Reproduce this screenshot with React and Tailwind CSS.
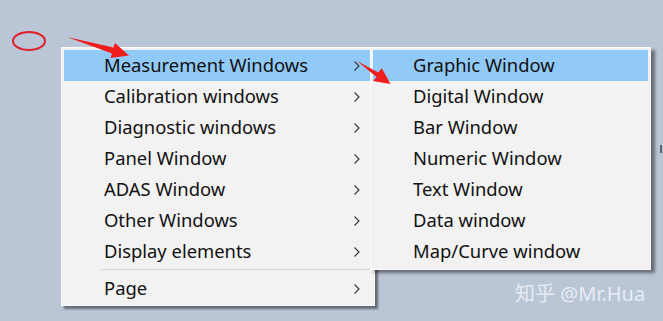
import React from "react";

const mainItems = [
  "Measurement Windows",
  "Calibration windows",
  "Diagnostic windows",
  "Panel Window",
  "ADAS Window",
  "Other Windows",
  "Display elements",
];
const subItems = [
  "Graphic Window",
  "Digital Window",
  "Bar Window",
  "Numeric Window",
  "Text Window",
  "Data window",
  "Map/Curve window",
];

function Chevron() {
  return (
    <svg width="8" height="12" viewBox="0 0 8 12" className="shrink-0">
      <polyline points="1.5,1.5 6,6 1.5,10.5" fill="none" stroke="#333" strokeWidth="1.1" />
    </svg>
  );
}

function Row({ label, active, sub }) {
  return (
    <div
      className={`flex h-[31px] items-center ${active ? "bg-[#91c9f7]" : ""} ${sub ? "pl-[40px]" : "pl-[40px] pr-[11px]"}`}
    >
      <span className="flex-1 text-[18.4px] leading-none text-[#111] whitespace-nowrap">{label}</span>
      {!sub && <Chevron />}
    </div>
  );
}

export default function App() {
  return (
    <div
      className="relative h-[321px] w-[663px] overflow-hidden bg-[#bac5d5]"
      style={{ fontFamily: '"Noto Sans", "Noto Sans CJK SC", sans-serif' }}
    >
      {/* red ellipse */}
      <svg className="absolute left-0 top-0" width="663" height="321">
        <ellipse cx="29" cy="41" rx="16" ry="9" fill="none" stroke="#e0202a" strokeWidth="2" />
      </svg>

      {/* main menu */}
      <div className="absolute left-[61px] top-[47px] w-[314px] border border-[#fbfbfb] bg-[#f2f2f2] p-[2px] pb-[1px] shadow-[3px_3px_2px_rgba(0,0,0,0.45)]">
        <div className="flex flex-col">
          {mainItems.map((t, i) => (
            <Row key={t} label={t} active={i === 0} />
          ))}
        </div>
        <div className="ml-[37px] mt-[2px] mb-[3px] h-px bg-[#d7d7d7]" />
        <Row label="Page" />
      </div>

      {/* sub menu */}
      <div className="absolute left-[370px] top-[47px] flex w-[281px] flex-col border border-[#fbfbfb] bg-[#f2f2f2] p-[2px] pb-[2px] shadow-[4px_3px_3px_rgba(0,0,0,0.45)]">
        {subItems.map((t, i) => (
          <Row key={t} label={t} active={i === 0} sub />
        ))}
      </div>

      {/* arrows */}
      <svg className="absolute left-0 top-0" width="663" height="321">
        <path
          d="M67 37 L113.4 47.6 L115 43 L129 55.5 L110.5 58 L112 53.5 Z"
          fill="#f01d1d"
        />
        <path
          d="M357 61 L378.2 72.4 L381.8 68.3 L390.5 84 L373 81 L376.6 77 Z"
          fill="#f01d1d"
        />
      </svg>

      {/* watermark */}
      <div className="absolute left-[515px] top-[279px] text-[20px] text-[#eef2f8]/90 whitespace-nowrap">
        知乎 @Mr.Hua
      </div>

      <div className="absolute left-[660px] top-[145px] h-[8px] w-[2px] bg-[#5a6270]" />
    </div>
  );
}
